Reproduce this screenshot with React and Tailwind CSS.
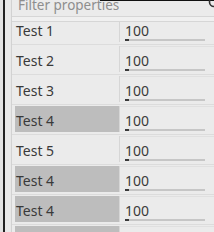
import React from "react";

const font = { fontFamily: '"Noto Sans", "Open Sans", sans-serif' };

function Row({ label, hl, first }) {
  return (
    <div className="flex flex-col">
      <div className={`flex ${first ? "h-[21px] border-t border-[#d6d6d6]" : "h-[26px]"}`}>
        <div className="w-[3px]" />
        <div className={`w-[104px] pl-px ${hl ? "bg-[#bdbdbd]" : ""} ${first ? "pt-0" : "pt-[5px]"}`}>
          <div className={`leading-[19px] text-[14px] text-[#3a3a3a] ${first ? "-mt-px" : ""}`}>{label}</div>
        </div>
        <div className="w-px bg-[#d6d6d6]" />
        <div className={`flex-1 flex flex-col pl-[5px] ${first ? "" : "pt-[4px] border-t border-[#e0e0e0]"}`}>
          <div className={`leading-[19px] text-[14px] text-[#3a3a3a] ${first ? "-mt-px" : ""}`}>100</div>
          <div className="w-[80px] h-[2px] bg-[#c6c6c6] flex -mt-px">
            <div className="w-[4px] h-[2px] bg-[#3a3a3a]" />
          </div>
        </div>
      </div>
      <div className="h-[4px] flex flex-col justify-center">
        <div className="h-px bg-[#dcdcdc]" />
      </div>
    </div>
  );
}

export default function App() {
  const rows = [
    ["Test 1", false],
    ["Test 2", false],
    ["Test 3", false],
    ["Test 4", true],
    ["Test 5", false],
    ["Test 4", true],
    ["Test 4", true],
    ["Test 4", true],
  ];
  return (
    <div className="w-[214px] h-[232px] overflow-hidden flex bg-[#e8e8e8]" style={font}>
      <div className="w-[3px] bg-[#e2e2e2]" />
      <div className="w-[2px] bg-[#202020]" />
      <div className="w-[6px] bg-[#e8e8e8]" />
      <div className="w-px bg-[#d2d2d2]" />
      <div className="flex-1 min-w-0 flex flex-col bg-[#ebebeb]">
        <div className="h-[17px] relative overflow-hidden bg-[#ebebeb] border-b border-[#d6d6d6] pl-[6px] shrink-0">
          <div className="-mt-[4px] leading-[19px] text-[13.5px] text-[#8e8e8e] whitespace-nowrap">Filter properties</div>
          <div className="absolute top-0 left-[88px] right-0 h-px bg-[#111]" />
          <svg className="absolute right-[-8px] top-[-4px]" width="14" height="14" viewBox="0 0 14 14">
            <circle cx="6" cy="6" r="4.5" fill="none" stroke="#333" strokeWidth="1.6" />
          </svg>
        </div>
        <div className="h-[4px] bg-[#f0f0f0] shrink-0" />
        {rows.map(([l, h], i) => (
          <Row key={i} label={l} hl={h} first={i === 0} />
        ))}
      </div>
    </div>
  );
}
